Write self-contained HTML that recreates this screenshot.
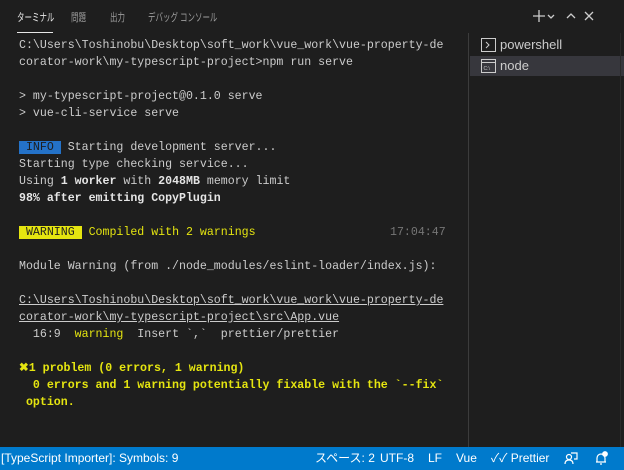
<!DOCTYPE html>
<html><head><meta charset="utf-8"><style>
*{margin:0;padding:0;box-sizing:border-box}
html,body{width:624px;height:470px;overflow:hidden}
body{background:#1e1e1e;position:relative;font-family:"Liberation Sans","Noto Sans CJK JP",sans-serif;color:#ccc}
.tab{position:absolute;top:9px;font-size:11px;color:#9d9d9d;transform:scaleX(0.68);transform-origin:left;white-space:nowrap}
.term{position:absolute;left:19px;top:37px;font-family:"Liberation Mono",monospace;font-size:11.6px;line-height:17px;color:#cccccc;width:440px}
.term div{height:17px;white-space:pre;position:relative}
b{font-weight:bold;color:#e5e5e5}
.y{color:#e5e510}
.info{background:#2472c8;color:#1e1e1e}
.warn{background:#e5e510;color:#1e1e1e}
u{text-decoration:underline}
.side{position:absolute;left:468px;top:33px;width:156px;height:414px;border-left:1px solid #3c3c3c}
.row{position:absolute;left:1px;width:155px;height:20px;font-size:13px;color:#ccc;line-height:20px;padding-left:30px}
.status{position:absolute;left:0;top:447px;width:624px;height:23px;background:#007acc;color:#fff;font-size:12px;line-height:23px}
.status span{position:absolute;top:0;white-space:nowrap}
</style></head><body>
<div class="tab" style="left:17px;color:#e7e7e7">ターミナル</div>
<div style="position:absolute;left:17px;top:32px;width:36px;height:1px;background:#e7e7e7"></div>
<div class="tab" style="left:71px">問題</div>
<div class="tab" style="left:110px">出力</div>
<div class="tab" style="left:148px">デバッグ コンソール</div>
<svg style="position:absolute;left:530px;top:8px" width="90" height="16" viewBox="0 0 90 16" fill="none" stroke="#ccc" stroke-width="1.3">
<path d="M3 8h12M9 2v12"/><path d="M18 7l3 3 3-3"/><path d="M37 10l4-4 4 4"/><path d="M55 4l8 8M63 4l-8 8"/></svg>
<div class="term">
<div>C:\Users\Toshinobu\Desktop\soft_work\vue_work\vue-property-de</div>
<div>corator-work\my-typescript-project&gt;npm run serve</div>
<div></div>
<div>&gt; my-typescript-project@0.1.0 serve</div>
<div>&gt; vue-cli-service serve</div>
<div></div>
<div><span class="info"> INFO </span> Starting development server...</div>
<div>Starting type checking service...</div>
<div>Using <b>1 worker</b> with <b>2048MB</b> memory limit</div>
<div><b>98% after emitting CopyPlugin</b></div>
<div></div>
<div><span class="warn"> WARNING </span> <span class="y">Compiled with 2 warnings</span><span style="color:#767676;position:absolute;left:371px;top:0">17:04:47</span></div>
<div></div>
<div>Module Warning (from ./node_modules/eslint-loader/index.js):</div>
<div></div>
<div><u>C:\Users\Toshinobu\Desktop\soft_work\vue_work\vue-property-de</u></div>
<div><u>corator-work\my-typescript-project\src\App.vue</u></div>
<div>  16:9  <span class="y">warning</span>  Insert `,`  prettier/prettier</div>
<div></div>
<div><b class="y">✖1 problem (0 errors, 1 warning)</b></div>
<div><b class="y">  0 errors and 1 warning potentially fixable with the `--fix`</b></div>
<div><b class="y"> option.</b></div>
</div>
<div class="side">
<div class="row" style="top:2px"><svg style="position:absolute;left:11px;top:3px" width="15" height="14" viewBox="0 0 15 14" fill="none" stroke="#ccc"><rect x="0.5" y="0.5" width="14" height="13"/><path d="M5 4l3 3-3 3"/></svg>powershell</div>
<div class="row" style="top:23px;background:#37373d"><svg style="position:absolute;left:11px;top:3px" width="15" height="14" viewBox="0 0 15 14" fill="none" stroke="#ccc"><rect x="0.5" y="0.5" width="14" height="13"/><path d="M0.5 3.5h14"/><text x="2.5" y="11" font-size="5" fill="#ccc" stroke="none" font-family="Liberation Sans">C:\</text></svg>node</div>
</div>
<div style="position:absolute;left:620px;top:33px;width:1px;height:414px;background:#2a2a2a"></div>
<div class="status">
<span style="left:1px">[TypeScript Importer]: Symbols: 9</span>
<span style="left:315px">スペース: 2</span>
<span style="left:380px">UTF-8</span>
<span style="left:428px">LF</span>
<span style="left:456px">Vue</span>
<span style="left:491px">✓✓ Prettier</span>
<svg style="position:absolute;left:563px;top:4px" width="16" height="15" viewBox="0 0 16 15" fill="none" stroke="#fff" stroke-width="1.2"><path d="M8 2h6v6h-3"/><circle cx="6" cy="6" r="2.5"/><path d="M2 13c0-3 2-4 4-4s4 1 4 4"/></svg>
<svg style="position:absolute;left:593px;top:4px" width="16" height="15" viewBox="0 0 16 15" fill="none" stroke="#fff" stroke-width="1.2"><path d="M3 11h10M4 11V7a4 4 0 0 1 8 0v4M7 13h2"/><circle cx="12" cy="3" r="2.3" fill="#fff"/></svg>
</div>
</body></html>
